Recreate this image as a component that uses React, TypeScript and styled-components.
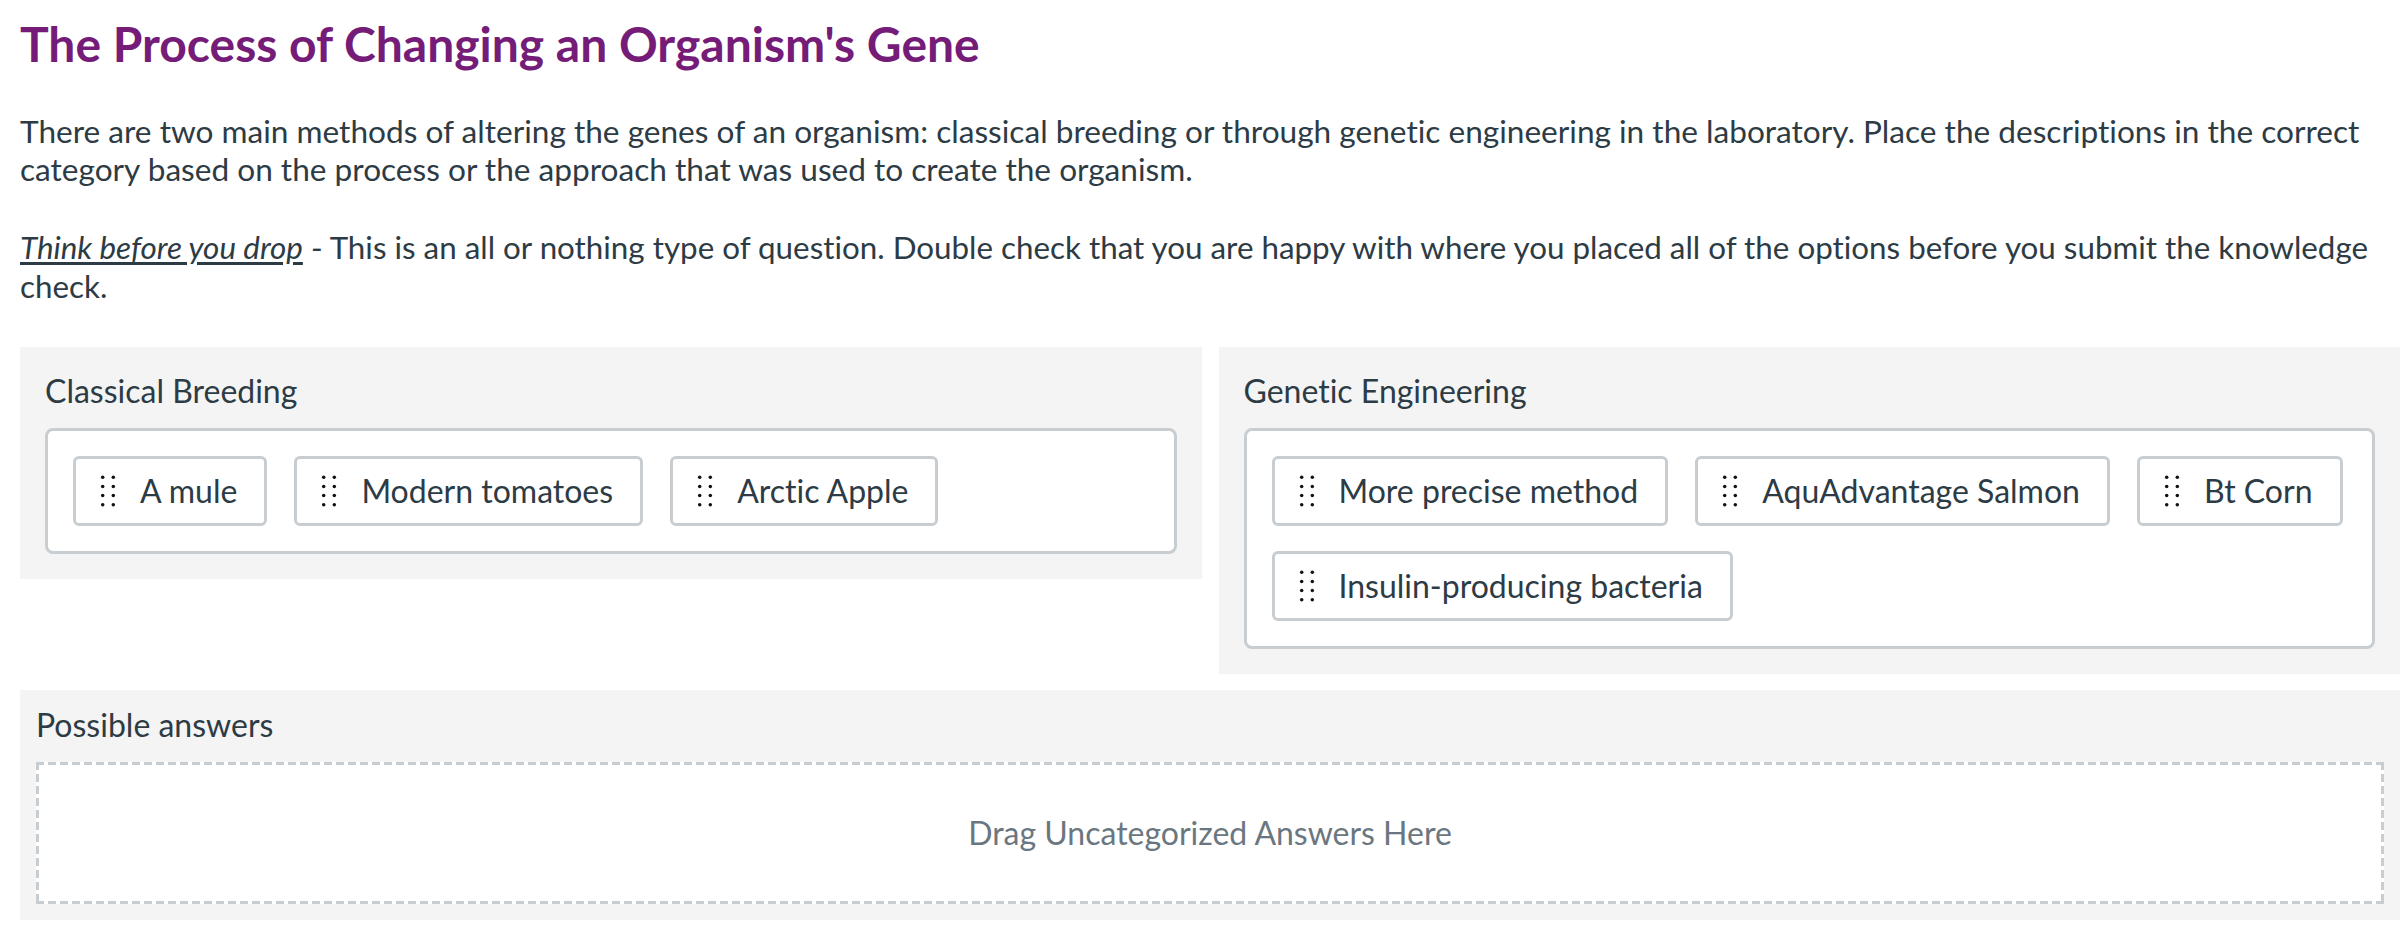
import React from "react";
import styled, { createGlobalStyle } from "styled-components";

const GlobalStyle = createGlobalStyle`
  html, body {
    margin: 0;
    padding: 0;
    background: #ffffff;
  }
  body {
    font-family: Lato, "Liberation Sans", sans-serif;
    color: #2d3b45;
    font-size: 32px;
    line-height: 1.2;
    font-variant-ligatures: no-common-ligatures;
    font-feature-settings: "liga" 0, "clig" 0;
  }
  * { box-sizing: border-box; }
`;

const Page = styled.main`
  padding: 15px 8px 20px 20px;
`;

const Title = styled.h2`
  margin: 0 0 39px;
  font-size: 48px;
  line-height: 57.6px;
  font-weight: 700;
  color: #751c79;
`;

const Paragraph = styled.p<{ $last?: boolean }>`
  margin: 0 0 ${(p) => (p.$last ? "42px" : "40px")};
  font-size: ${(p) => (p.$last ? "31.35px" : "31.6px")};
  line-height: 38.4px;
`;

const Emph = styled.span`
  font-style: italic;
  text-decoration: underline;
  text-underline-offset: 3px;
`;

const CategoryGrid = styled.div`
  display: grid;
  grid-template-columns: 1fr 1fr;
  column-gap: 17px;
  align-items: start;
  margin-bottom: 16px;
`;

const Panel = styled.section<{ $compact?: boolean }>`
  background: #f4f4f4;
  padding: ${(p) => (p.$compact ? "16px" : "25px")};
`;

const PanelLabel = styled.div<{ $gap: number }>`
  font-size: 32px;
  line-height: 38.4px;
  margin-bottom: ${(p) => p.$gap}px;
`;

const DropZone = styled.div`
  background: #ffffff;
  border: 3px solid #c7cdd1;
  border-radius: 8px;
  padding: 25px;
  display: flex;
  flex-wrap: wrap;
  gap: 25px 27px;
`;

const Chip = styled.div`
  display: inline-flex;
  align-items: center;
  gap: 24px;
  background: #ffffff;
  border: 3px solid #c7cdd1;
  border-radius: 6px;
  padding: 12px 27px 12px 24px;
  font-size: 32px;
  line-height: 40px;
  color: #2d3b45;
  white-space: nowrap;
`;

const Handle = styled.svg`
  flex: none;
  width: 16px;
  height: 32px;
  display: block;
`;

const dashH = "repeating-linear-gradient(90deg, #c7cdd1 0 8px, transparent 8px 12px)";
const dashV = "repeating-linear-gradient(180deg, #c7cdd1 0 8px, transparent 8px 12px)";

const Unsorted = styled.div`
  background:
    ${dashH} left top / 100% 3px no-repeat,
    ${dashH} left bottom / 100% 3px no-repeat,
    ${dashV} left top / 3px 100% no-repeat,
    ${dashV} right top / 3px 100% no-repeat,
    #ffffff;
  padding: 52px 3px;
  text-align: center;
  font-size: 32px;
  line-height: 38.4px;
  color: #6b7780;
`;

const DragHandle = () => (
  <Handle viewBox="0 0 16 32" aria-hidden="true">
    {[2.2, 11.4, 20.6, 29.8].map((cy) =>
      [2.7, 13.3].map((cx) => <circle key={`${cx}-${cy}`} cx={cx} cy={cy} r={1.75} fill="#111" />)
    )}
  </Handle>
);

const Item = ({ label }: { label: string }) => (
  <Chip>
    <DragHandle />
    <span>{label}</span>
  </Chip>
);

const categories = [
  { name: "Classical Breeding", items: ["A mule", "Modern tomatoes", "Arctic Apple"] },
  {
    name: "Genetic Engineering",
    items: ["More precise method", "AquAdvantage Salmon", "Bt Corn", "Insulin-producing bacteria"],
  },
];

export default function App() {
  return (
    <>
      <GlobalStyle />
      <Page>
        <Title>The Process of Changing an Organism's Gene</Title>
        <Paragraph>
          There are two main methods of altering the genes of an organism: classical breeding or through genetic
          engineering in the laboratory. Place the descriptions in the correct category based on the process or the
          approach that was used to create the organism.
        </Paragraph>
        <Paragraph $last>
          <Emph>Think before you drop</Emph> - This is an all or nothing type of question. Double check that you are
          happy with where you placed all of the options before you submit the knowledge check.
        </Paragraph>
        <CategoryGrid>
          {categories.map((c) => (
            <Panel key={c.name}>
              <PanelLabel $gap={17}>{c.name}</PanelLabel>
              <DropZone>
                {c.items.map((it) => (
                  <Item key={it} label={it} />
                ))}
              </DropZone>
            </Panel>
          ))}
        </CategoryGrid>
        <Panel $compact>
          <PanelLabel $gap={18}>Possible answers</PanelLabel>
          <Unsorted>Drag Uncategorized Answers Here</Unsorted>
        </Panel>
      </Page>
    </>
  );
}
